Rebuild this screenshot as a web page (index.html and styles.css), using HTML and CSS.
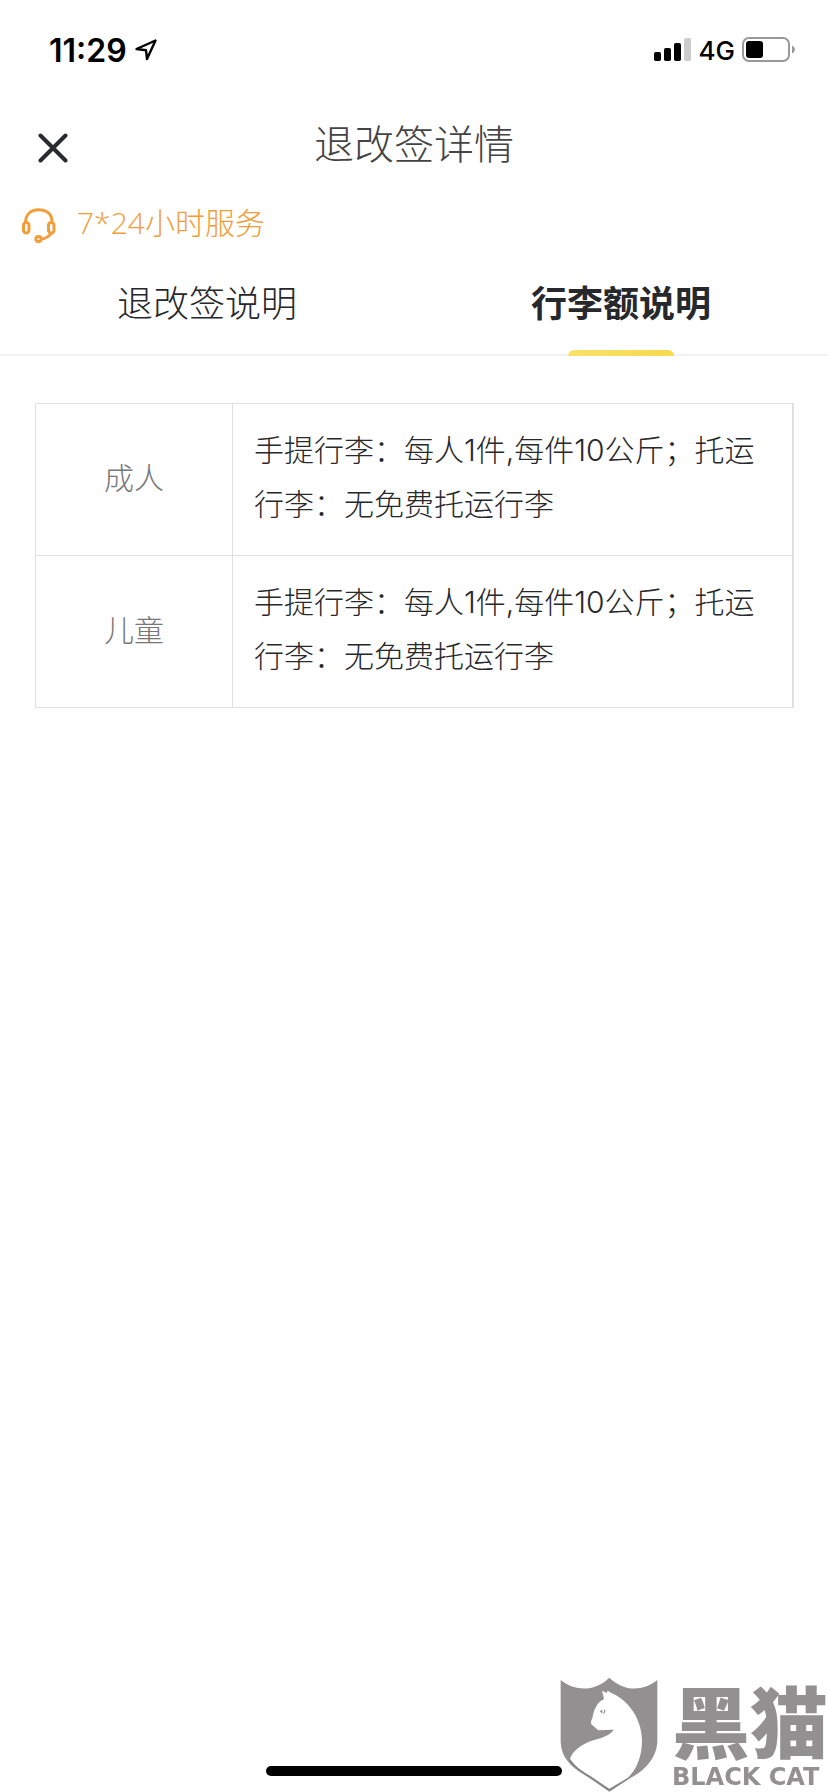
FILE: index.html
```
<!DOCTYPE html>
<html lang="zh-CN">
<head>
    <meta charset="UTF-8">
    <meta name="viewport" content="width=device-width, initial-scale=1.0">
    <title>退改签详情</title>
    <link rel="stylesheet" href="styles.css">
</head>
<body>
    <div class="status-bar">
        <div class="status-left">
            <span class="time">11:29</span>
            <svg width="24" height="24" viewBox="0 0 24 24" fill="none" stroke="#000" stroke-width="2.4" stroke-linejoin="round">
                <path d="M21.5 2.5 L2.5 11 L12 12.2 L13 21 Z"/>
            </svg>
        </div>
        <div class="status-right">
            <svg width="38" height="24" viewBox="0 0 38 24">
                <rect x="0" y="14" width="7" height="9" rx="1.8"/>
                <rect x="10" y="10" width="7" height="13" rx="1.8"/>
                <rect x="20" y="5" width="7" height="18" rx="1.8"/>
                <rect x="30" y="0" width="7" height="23" rx="1.8" fill="#ccc"/>
            </svg>
            <span class="network">4G</span>
            <svg width="54" height="26" viewBox="0 0 54 26">
                <rect x="1" y="1" width="46" height="23" rx="6" fill="none" stroke="#999" stroke-width="2"/>
                <rect x="4" y="4" width="17" height="17" rx="3"/>
                <path d="M50 8.5 Q53 10 53 12.5 Q53 15 50 16.5 Z" fill="#999"/>
            </svg>
        </div>
    </div>

    <header class="header">
        <button class="close" type="button" aria-label="关闭">
            <svg width="30" height="30" viewBox="0 0 30 30" stroke="#2a2b2e" stroke-width="4" stroke-linecap="round">
                <path d="M2.5 2.5 L27.5 27.5 M27.5 2.5 L2.5 27.5"/>
            </svg>
        </button>
        <h1>退改签详情</h1>
    </header>

    <a class="service" href="#">
        <svg width="34" height="36" viewBox="0 0 34 36" fill="none" stroke="#f29d38" stroke-width="3">
            <path d="M3.5 15 C3.5 6 9 1.7 16.8 1.7 C24.5 1.7 30.2 6 30.2 15"/>
            <rect x="1.5" y="14.5" width="5.5" height="10.5" rx="2.7"/>
            <rect x="26.5" y="14.5" width="5.5" height="10.5" rx="2.7"/>
            <path d="M29.5 25 C27 28.5 24 30.7 19.5 31"/>
            <circle cx="16.5" cy="31" r="2.6"/>
        </svg>
        <span class="service-text">7*24小时服务</span>
    </a>

    <nav class="tabs">
        <button class="tab" type="button">退改签说明</button>
        <button class="tab active" type="button">行李额说明</button>
    </nav>

    <main class="content">
        <table class="baggage">
            <tr>
                <th scope="row">成人</th>
                <td>手提行李：每人1件,每件10公斤；托运行李：无免费托运行李</td>
            </tr>
            <tr>
                <th scope="row">儿童</th>
                <td>手提行李：每人1件,每件10公斤；托运行李：无免费托运行李</td>
            </tr>
        </table>
    </main>

    <div class="home-indicator"></div>

    <div class="watermark">
        <svg width="98" height="115" viewBox="56 50 294 345">
            <path fill="#929091" d="M58 59 C105 96 163 92 204 52 C245 92 302 96 348 59 V240 C348 292 310 332 266 354 L204 394 L140 350 C98 326 58 298 58 240 Z"/>
            <path fill="#fff" d="M182 91 L196 98 L199 91 L210 98 C262 118 303 180 302 243 C301 290 286 328 260 352 L204 385 L143 344 C120 331 98 314 86 295 C94 272 120 252 156 240 C187 231 209 222 217 208 L171 210 L150 192 C147 187 150 180 153 174 C158 146 167 126 188 116 Z"/>
            <path fill="#929091" d="M175 153 L183 148 L183 160 Z M187 147 C195 150 193 159 184 162 C189 156 189 152 187 147 Z"/>
            <path fill="none" stroke="#7d7b7c" stroke-width="3" d="M84 297 C98 321 119 333 142 348 L204 390 L264 352"/>
        </svg>
        <div class="brand">
            <span class="brand-cn">黑猫</span>
            <span class="brand-en">BLACK CAT</span>
        </div>
    </div>
</body>
</html>
```
FILE: styles.css
```
* {
    box-sizing: border-box;
}
body {
    margin: 0;
    min-height: 100vh;
    display: flex;
    flex-direction: column;
    background: #fff;
    color: #27282b;
    font-family: Inter, "Noto Sans CJK SC", sans-serif;
    font-weight: 300;
}
svg {
    display: block;
    flex: none;
}
button {
    padding: 0;
    border: none;
    background: none;
    color: inherit;
    font: inherit;
    cursor: pointer;
}

.status-bar {
    display: flex;
    justify-content: space-between;
    align-items: center;
    height: 100px;
    padding: 0 32px 0 49px;
    color: #000;
}
.status-left,
.status-right {
    display: flex;
    align-items: center;
    gap: 7px;
}
.time {
    font-size: 32px;
    font-weight: 600;
}
.network {
    font-size: 26px;
    font-weight: 500;
}

.header {
    display: grid;
    grid-template-columns: 1fr auto 1fr;
    align-items: center;
    height: 96px;
    padding: 0 38px;
}
.header h1 {
    margin: 0;
    padding-bottom: 6px;
    font-size: 40px;
    line-height: 60px;
    font-weight: 300;
    color: #444;
}
.close {
    justify-self: start;
}

.service {
    display: flex;
    align-items: center;
    gap: 21px;
    height: 56px;
    padding: 4px 22px 0;
    font-family: "Open Sans", "Noto Sans CJK SC", sans-serif;
    font-size: 30px;
    line-height: 44px;
    color: #f29d38;
    text-decoration: none;
}
.service-text {
    padding-bottom: 6px;
}

.tabs {
    display: flex;
    border-bottom: 2px solid #f1f1f1;
}
.tab {
    position: relative;
    flex: 1;
    height: 102px;
    padding-bottom: 4px;
    font-size: 36px;
}
.tab.active {
    font-weight: 700;
}
.tab.active::after {
    content: "";
    position: absolute;
    left: 50%;
    bottom: -2px;
    width: 106px;
    height: 6px;
    margin-left: -53px;
    border-radius: 6px 6px 0 0;
    background: linear-gradient(90deg, #f8e16c, #f6da4c);
}

.content {
    padding: 47px 34px 0 35px;
}
.baggage {
    width: 100%;
    border-collapse: collapse;
    table-layout: fixed;
    font-size: 30px;
    line-height: 54px;
}
.baggage th,
.baggage td {
    border: 1px solid #e0e0e3;
    padding: 19px 21px 24px;
}
.baggage td:last-child {
    border-right-width: 2px;
}
.baggage th {
    width: 197px;
    padding: 20px 0 23px;
    font-weight: 300;
    color: #777;
}

.home-indicator {
    width: 296px;
    height: 10px;
    margin: auto auto 16px;
    border-radius: 5px;
    background: #000;
}

.watermark {
    position: fixed;
    right: 0;
    bottom: 0;
    display: flex;
    gap: 14px;
    color: #929091;
}
.brand {
    display: flex;
    flex-direction: column;
    justify-content: flex-end;
    padding-bottom: 3px;
}
.brand-cn {
    padding-bottom: 2px;
    font-size: 78px;
    line-height: 76px;
    font-weight: 900;
}
.brand-en {
    font-family: "DejaVu Sans", sans-serif;
    font-size: 24px;
    line-height: 24px;
    font-weight: 700;
    white-space: nowrap;
}
```
